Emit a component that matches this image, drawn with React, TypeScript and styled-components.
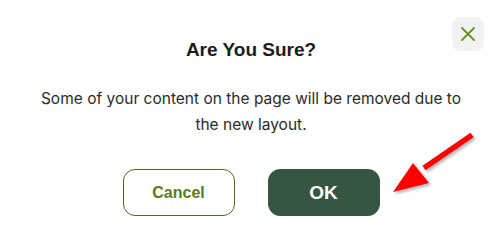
import React from 'react';
import styled, { createGlobalStyle } from 'styled-components';

const GlobalStyle = createGlobalStyle`
  html, body {
    margin: 0;
    padding: 0;
    background: #ffffff;
  }
  body {
    font-family: Inter, 'Liberation Sans', sans-serif;
  }
`;

const Modal = styled.div`
  position: relative;
  width: 502px;
  height: 244px;
  box-sizing: border-box;
  padding-top: 38px;
  display: flex;
  flex-direction: column;
  align-items: center;
  background: #ffffff;
`;

const CloseButton = styled.button`
  position: absolute;
  top: 17px;
  right: 18px;
  width: 32px;
  height: 34px;
  border: none;
  border-radius: 8px;
  background: #f2f2f2;
  display: flex;
  align-items: center;
  justify-content: center;
  padding: 0;
  cursor: pointer;
`;

const Title = styled.h2`
  margin: 0;
  font-family: 'Liberation Sans', Arial, sans-serif;
  font-size: 19px;
  font-weight: 700;
  line-height: 24px;
  color: #1c1c1c;
`;

const Message = styled.p`
  margin: 24px 0 0;
  width: 440px;
  font-size: 15.5px;
  line-height: 26px;
  color: #2b2b2b;
  text-align: center;
`;

const Actions = styled.div`
  display: flex;
  gap: 33px;
  margin-top: 31px;
`;

const ActionButton = styled.button<{ $primary?: boolean }>`
  width: 112px;
  height: 47px;
  box-sizing: border-box;
  border-radius: 12px;
  font-family: 'Liberation Sans', Arial, sans-serif;
  font-weight: 700;
  cursor: pointer;
  border: 1.5px solid ${(p) => (p.$primary ? '#375641' : '#4b6b1e')};
  background: ${(p) => (p.$primary ? '#375641' : '#ffffff')};
  color: ${(p) => (p.$primary ? '#ffffff' : '#5b7a1a')};
  font-size: ${(p) => (p.$primary ? '19px' : '16px')};
`;

const Arrow = styled.svg`
  position: absolute;
  left: 388px;
  top: 130px;
  pointer-events: none;
`;

const App: React.FunctionComponent = (): JSX.Element => (
  <>
    <GlobalStyle />
    <Modal>
      <CloseButton aria-label='close'>
        <svg width='14' height='14' viewBox='0 0 14 14'>
          <path d='M1 1L13 13M13 1L1 13' stroke='#6a8f22' strokeWidth='1.8' strokeLinecap='round' />
        </svg>
      </CloseButton>
      <Title>Are You Sure?</Title>
      <Message>Some of your content on the page will be removed due to the new layout.</Message>
      <Actions>
        <ActionButton>Cancel</ActionButton>
        <ActionButton $primary>OK</ActionButton>
      </Actions>
      <Arrow width='94' height='72' viewBox='0 0 94 72'>
        <defs>
          <filter id='shadow' x='-20%' y='-20%' width='140%' height='140%'>
            <feDropShadow dx='2' dy='2' stdDeviation='1.5' floodColor='#000' floodOpacity='0.3' />
          </filter>
        </defs>
        <g filter='url(#shadow)'>
          <path d='M84 5L36 38' stroke='#ff0000' strokeWidth='5.5' strokeLinecap='butt' />
          <path d='M5 62L25 33L41 53Z' fill='#ff0000' />
        </g>
      </Arrow>
    </Modal>
  </>
);

export default App;
